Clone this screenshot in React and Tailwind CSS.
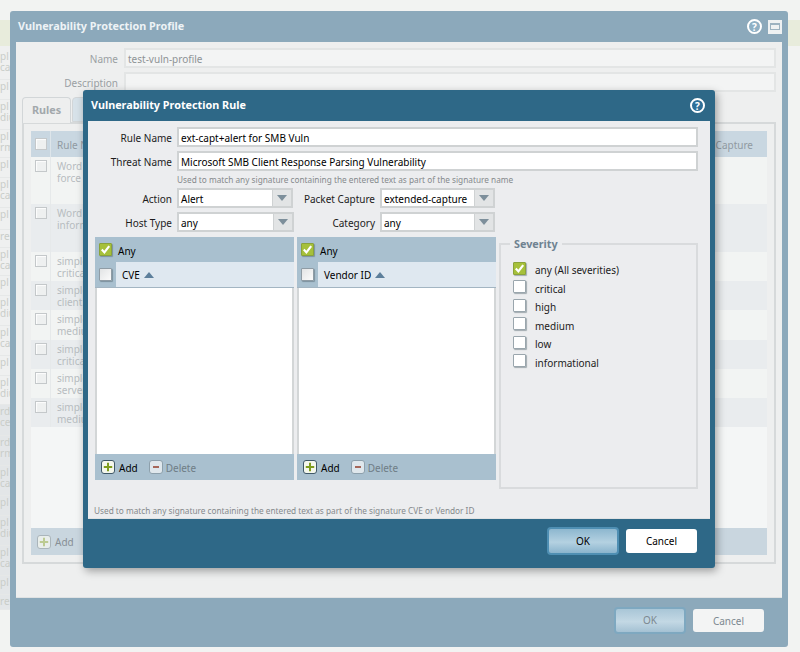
import React from "react";

function Check({ on, grey, className = "" }) {
  return (
    <span className={"inline-flex shrink-0 items-center justify-center w-[13px] h-[13px] rounded-[1px] border shadow-[1px_1px_1px_rgba(70,90,100,0.45)] " + (on ? "bg-[#a6c03a] border-[#8aa33a]" : grey ? "bg-[linear-gradient(135deg,#e2e4e5,#fbfbfb)] border-[#8f9ca5]" : "bg-white border-[#9aa6ad]") + " " + className}>
      {on && (
        <svg width="11" height="11" viewBox="0 0 11 11">
          <path d="M1.8 5.6 L4.4 8.4 L9.2 2.2" fill="none" stroke="white" strokeWidth="2.2" />
        </svg>
      )}
    </span>
  );
}

function FadedCheck() {
  return <span className="block w-[12px] h-[12px] border border-[#c4c8ca] bg-[#eef0f0] shadow-[inset_1px_1px_1px_rgba(255,255,255,0.9)]" />;
}

function Input({ value, className = "" }) {
  return (
    <div className={"h-[20px] flex items-center pl-[2px] pt-[2px] bg-white border-2 border-[#cfd2d3] text-black whitespace-nowrap " + className}>
      {value}
    </div>
  );
}

function Select({ value, className = "" }) {
  return (
    <div className={"h-[20px] flex bg-white border-2 border-[#cfd2d3] text-black whitespace-nowrap " + className}>
      <div className="flex-1 flex items-center pl-[2px] pt-[2px]">{value}</div>
      <div className="w-[19px] flex items-center justify-center bg-[#e2e4e5] border-l border-[#cfd2d3]">
        <span className="w-0 h-0 border-l-[5px] border-r-[5px] border-t-[6px] border-l-transparent border-r-transparent border-t-[#7d8f9b]" />
      </div>
    </div>
  );
}

function RoundIcon({ kind, faded }) {
  const plus = kind === "plus";
  return (
    <span className={"flex items-center justify-center w-[14px] h-[14px] rounded-[3px] border " + (faded ? "border-[#aab5bb] bg-[#e9eeeb]" : plus ? "border-[#3f5868] bg-[#f4f7ec]" : "border-[#8da0ac] bg-[#dfe7ec]")}>
      <svg width="10" height="10" viewBox="0 0 10 10">
        {plus && <path d="M5 0.8 V9.2 M0.8 5 H9.2" stroke={faded ? "#bccb92" : "#7f9d1e"} strokeWidth="2" />}
        {!plus && <path d="M2 5 H8" stroke="#a0584a" strokeWidth="1.8" />}
      </svg>
    </span>
  );
}

function HelpIcon({ dark }) {
  return (
    <span className={"flex items-center justify-center w-[15px] h-[15px] rounded-full border-2 border-white text-[10px] font-bold leading-none text-white " + (dark ? "bg-[#2e6f97]" : "bg-[#8fb0c4]")}>?</span>
  );
}

function SigList({ title }) {
  return (
    <div className="w-[199px] flex flex-col">
      <div className="h-[25px] bg-[#a9c0cf] flex items-center pl-[4px] gap-[6px] text-black">
        <Check on />
        <span className="pt-[3px]">Any</span>
      </div>
      <div className="h-[26px] flex bg-[#dfe8f0] border-b border-[#a3b5c2] text-black">
        <div className="w-[21px] bg-[#a9c0cf] flex items-center justify-center">
          <Check grey />
        </div>
        <div className="flex items-center pl-[6px] gap-[4px]">
          <span className="pt-[1px]">{title}</span>
          <span className="w-0 h-0 border-l-[5px] border-r-[5px] border-b-[6px] border-l-transparent border-r-transparent border-b-[#5d7f9b]" />
        </div>
      </div>
      <div className="h-[166px] bg-white border-x-2 border-[#d3d6d7]" />
      <div className="h-[26px] bg-[#a9c0cf] flex items-center pl-[6px]">
        <RoundIcon kind="plus" />
        <span className="ml-[4px] pt-[2px] text-black">Add</span>
        <span className="ml-[11px]"><RoundIcon kind="minus" /></span>
        <span className="ml-[3px] pt-[2px] text-[#6f7d86]">Delete</span>
      </div>
    </div>
  );
}

function Row({ h, text, shade }) {
  return (
    <div className={"flex " + (shade ? "bg-[#e9ecee]" : "bg-[#f2f4f3]")} style={{ height: h }}>
      <div className="w-[20px] shrink-0 pt-[3px] pl-[4px] border-r border-[#e6e9ea]"><FadedCheck /></div>
      <div className="pl-[6px] pt-[3px] leading-[12px] text-[#b7bcc0] whitespace-pre">{text}</div>
    </div>
  );
}

function OutsideRow({ text, shade, h }) {
  return (
    <div className={"leading-[11px] pt-[1px] text-[#c9cdc9] whitespace-pre border-b border-[#e6e8e8] " + (shade ? "bg-[#e3e6e8]" : "bg-[#eff0f0]")} style={{ height: h }}>
      {text}
    </div>
  );
}

const sideRows = [
  ["pl\nca", 30], ["pl", 20], ["pl\ndiu", 30], ["pl\nrm", 28], ["pl", 20],
  ["pl\nca", 30], ["pl", 22], ["re.", 18], ["pl\nca", 28], ["pl", 20],
  ["pl\ndiu", 30], ["pl\nca", 30], ["pl", 20], ["pl\ndiu", 29], ["rd\nce", 31, true],
  ["rd\nrm", 30, true], ["pl\nca", 30, true], ["pl", 20, true], ["pl\ndiu", 30, true],
  ["pl\nca", 30, true], ["pl", 19, true], ["re.", 15, true],
];

export default function App() {
  return (
    <div className="relative w-[800px] h-[652px] overflow-hidden bg-[#f2f3f2] text-[10px]" style={{ fontFamily: '"Noto Sans", Tahoma, sans-serif' }}>
      {/* page behind the windows */}
      <div className="w-[10px] pt-[20px]">
        <div className="h-[26px] bg-[#e8ecdc]" />
        <div className="h-[4px] bg-[#eff0f0]" />
        {sideRows.map((r, i) => (
          <OutsideRow key={i} text={r[0]} h={r[1]} shade={r[2]} />
        ))}
      </div>
      <div className="absolute right-0 top-[20px] w-[12px] h-[26px] bg-[#e8ecdc]" />

      {/* profile window */}
      <div className="absolute left-[10px] top-[11px] w-[778px] h-[636px] rounded-[3px] bg-[#8ca9bb] flex flex-col">
        <div className="h-[31px] shrink-0 flex items-center pl-[8px] pr-[6px] text-[10.8px] font-bold text-[#eef3f6]">
          <span className="flex-1">Vulnerability Protection Profile</span>
          <HelpIcon />
          <span className="ml-[6px] w-[14px] h-[14px] bg-[#eef1f2] flex items-center justify-center">
            <span className="w-[10px] h-[7px] border border-[#9cb2c0] border-t-2" />
          </span>
        </div>
        <div className="mx-[6px] h-[556px] bg-[#eeefef] border-b border-[#dfe2e3] flex flex-col px-[6px] pt-[6px]">
          <div className="flex items-center gap-[6px] text-[#9a9fa3]">
            <span className="w-[96px] text-right pt-[2px]">Name</span>
            <div className="flex-1 h-[20px] flex items-center pl-[2px] pt-[2px] bg-[#f3f4f4] border-2 border-[#e3e5e5] text-[#8e9396]">test-vuln-profile</div>
          </div>
          <div className="flex items-center gap-[6px] text-[#9a9fa3] mt-[4px]">
            <span className="w-[96px] text-right pt-[2px]">Description</span>
            <div className="flex-1 h-[20px] bg-[#f3f4f4] border-2 border-[#e3e5e5]" />
          </div>
          <div className="flex mt-[5px] h-[26px] -mb-[1px] relative">
            <div className="w-[49px] h-[26px] bg-[#eeefef] border border-b-0 border-[#d2d6d8] rounded-t-[4px] flex items-center justify-center font-bold text-[#a2a8ac] text-[10.8px]">Rules</div>
            <div className="ml-[1px] w-[60px] h-[25px] bg-[#d7e2e9] border border-[#d2d6d8] rounded-t-[4px]" />
          </div>
          <div className="h-[442px] border-2 border-[#d6d9da] p-[7px] flex flex-col">
            <div className="h-[26px] shrink-0 flex bg-[#c9d7e1] text-[#909aa1]">
              <div className="w-[20px] flex items-center pl-[4px] border-r border-[#dde5ea]"><FadedCheck /></div>
              <div className="flex-1 flex items-center pl-[6px] pt-[2px]">Rule Name</div>
              <div className="pr-[14px] flex items-center pt-[2px]">Packet Capture</div>
            </div>
            <div className="flex-1 bg-[#f4f6f6] flex flex-col">
              <Row h={47} text={"Word\nforce"} />
              <Row h={48} text={"Word\ninform"} shade />
              <Row h={29} text={"simple\ncritical"} />
              <Row h={29} text={"simple\nclient"} shade />
              <Row h={30} text={"simple\nmedium"} />
              <Row h={29} text={"simple\ncritical"} shade />
              <Row h={29} text={"simple\nserver"} />
              <Row h={29} text={"simple\nmedium"} shade />
            </div>
            <div className="h-[27px] shrink-0 bg-[#c9d6df] flex items-center pl-[6px] text-[#878f95]">
              <RoundIcon kind="plus" faded />
              <span className="ml-[4px] pt-[2px]">Add</span>
            </div>
          </div>
        </div>
        <div className="flex-1 flex items-center justify-end gap-[7px] pr-[24px] pb-[5px]">
          <div className="w-[72px] h-[27px] rounded-[4px] border-2 border-[#7ea8c0] bg-[linear-gradient(#a9c6d7,#c3d8e4_55%,#a4c1d3)] flex items-center justify-center text-[#7c8890]">OK</div>
          <div className="w-[71px] h-[23px] rounded-[3px] bg-[#f3f4f4] flex items-center justify-center pt-[2px] text-[#7c8890]">Cancel</div>
        </div>
      </div>

      {/* rule dialog */}
      <div className="absolute left-[83px] top-[90px] w-[632px] h-[478px] rounded-[3px] bg-[#2e6887] shadow-[2px_3px_8px_rgba(0,0,0,0.35)] flex flex-col">
        <div className="h-[31px] shrink-0 flex items-center justify-between pl-[8px] pr-[10px] text-[10.8px] font-bold text-white">
          <span>Vulnerability Protection Rule</span>
          <HelpIcon dark />
        </div>
        <div className="mx-[5px] h-[398px] bg-[#ecedef] border-b border-[#e0e2e3] pt-[6px] pl-[7px] flex flex-col text-[#1c1c1c]">
          <div className="flex items-center">
            <span className="w-[77px] text-right mr-[5px] pt-[2px]">Rule Name</span>
            <Input value="ext-capt+alert for SMB Vuln" className="w-[521px]" />
          </div>
          <div className="flex items-center mt-[4px]">
            <span className="w-[77px] text-right mr-[5px] pt-[2px]">Threat Name</span>
            <Input value="Microsoft SMB Client Response Parsing Vulnerability" className="w-[521px]" />
          </div>
          <div className="ml-[82px] mt-[2px] h-[15px] flex items-center text-[8.25px] text-[#85898c]">Used to match any signature containing the entered text as part of the signature name</div>
          <div className="flex items-center">
            <span className="w-[77px] text-right mr-[5px] pt-[2px]">Action</span>
            <Select value="Alert" className="w-[116px]" />
            <span className="w-[82px] text-right mr-[5px] pt-[2px]">Packet Capture</span>
            <Select value="extended-capture" className="w-[115px]" />
          </div>
          <div className="flex items-center mt-[4px]">
            <span className="w-[77px] text-right mr-[5px] pt-[2px]">Host Type</span>
            <Select value="any" className="w-[117px]" />
            <span className="w-[81px] text-right mr-[5px] pt-[2px]">Category</span>
            <Select value="any" className="w-[115px]" />
          </div>
          <div className="flex items-start gap-[3px] mt-[5px]">
            <SigList title="CVE" />
            <SigList title="Vendor ID" />
            <fieldset className="w-[199px] h-[252px] border-2 border-[#d9dbdd] pl-[12px] pt-[11px]">
              <legend className="-ml-[3px] px-[4px] font-bold text-[#6f8291] leading-[13px] text-[10.8px]">Severity</legend>
              {["any (All severities)", "critical", "high", "medium", "low", "informational"].map((s, i) => (
                <div key={s} className="h-[18.5px] flex items-center gap-[9px]">
                  <Check on={i === 0} className="-translate-y-[2px]" />
                  <span className="pt-[1px]">{s}</span>
                </div>
              ))}
            </fieldset>
          </div>
          <div className="-ml-[1px] mt-auto mb-[1px] text-[8.25px] text-[#85898c]">Used to match any signature containing the entered text as part of the signature CVE or Vendor ID</div>
        </div>
        <div className="flex-1 flex items-center justify-end gap-[7px] pr-[18px] pb-[6px]">
          <div className="w-[72px] h-[28px] rounded-[4px] border-2 border-[#4f8fb3] bg-[linear-gradient(#8db7cf,#b4d1e1_55%,#8ab4cd)] flex items-center justify-center pt-[1px] text-black">OK</div>
          <div className="w-[71px] h-[24px] rounded-[3px] bg-white flex items-center justify-center pt-[2px] text-black">Cancel</div>
        </div>
      </div>
    </div>
  );
}
